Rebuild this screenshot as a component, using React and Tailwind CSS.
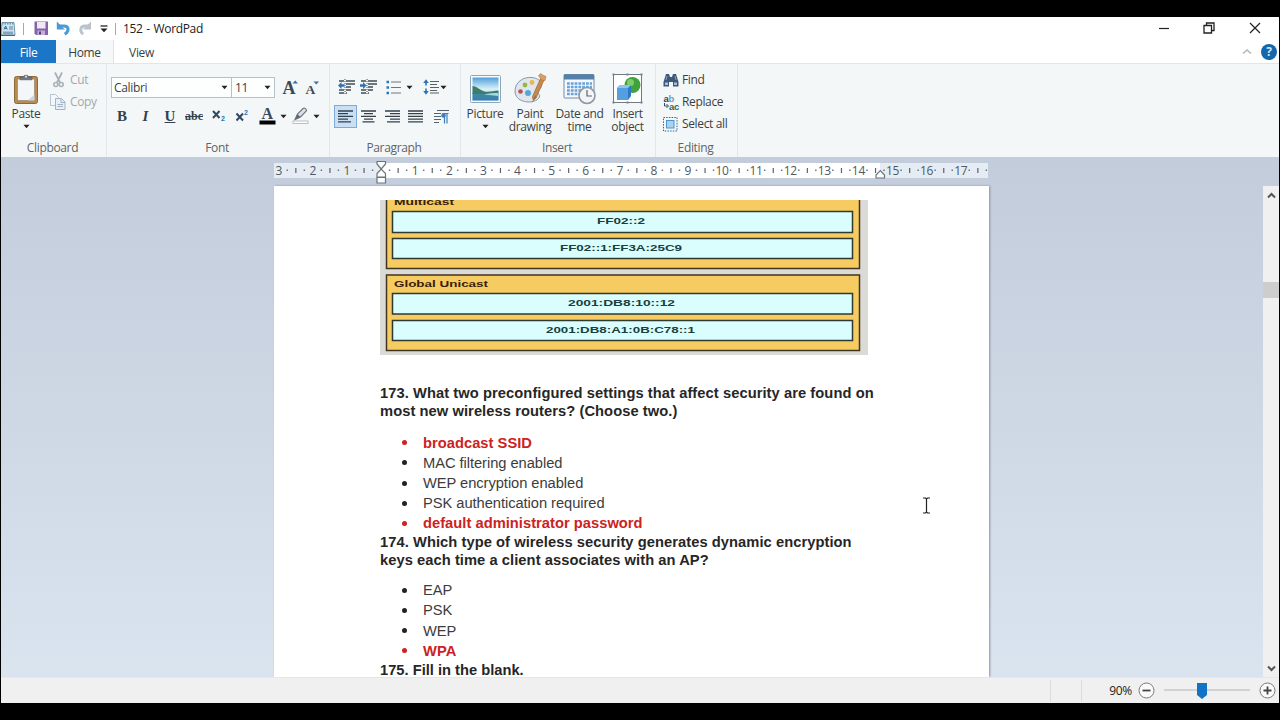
import React from 'react'

const UNIT = 34.1
const ZERO = 107

const Caret = ({ className = '' }) => (
  <svg className={`block shrink-0 ${className}`} width="7" height="5" viewBox="0 0 7 5">
    <path d="M0.5 0.8h6L3.5 4.2z" fill="#222" />
  </svg>
)

/* Title bar icons */
const AppIcon = () => (
  <svg width="15" height="16" viewBox="0 0 15 16">
    <path d="M1 1.5h12l1 12.5H0z" fill="#cfe4f0" stroke="#5d8299" strokeWidth="0.8" />
    <path d="M1 2.5h12" stroke="#6b9cb8" strokeWidth="2" strokeDasharray="1.5 1" />
    <path d="M3 8.5l1.6-3.5 1.6 3.5M3.6 7.5h2" stroke="#2c6b94" fill="none" />
    <path d="M8 6h4M8 8h4" stroke="#5b87a1" />
    <path d="M2 10.5h10v3H2z" fill="#7fa8c0" />
    <path d="M0 14.5h14" stroke="#44687d" />
  </svg>
)

const SaveIcon = () => (
  <svg width="15" height="15" viewBox="0 0 15 15">
    <path d="M0.5 0.5h13.5v13.5h-12l-1.5-1.5z" fill="#8562aa" />
    <rect x="3" y="1" width="8.5" height="6.5" fill="#efe8f4" />
    <rect x="3.5" y="9.5" width="7.5" height="4.5" fill="#c4b1d8" />
    <rect x="5" y="10.5" width="2" height="3" fill="#5b3a80" />
  </svg>
)

const UndoIcon = () => (
  <svg width="15" height="15" viewBox="0 0 15 15">
    <path d="M3 5h5c5 0 5.6 5 0.8 8.3" fill="none" stroke="#4a9bd3" strokeWidth="3" />
    <path d="M0.8 0.5V8.5h8z" fill="#4a9bd3" />
  </svg>
)

const RedoIcon = () => (
  <svg width="14" height="15" viewBox="0 0 14 15">
    <path d="M11 5H7C2 5 1.4 10 5 13.3" fill="none" stroke="#b9c3cd" strokeWidth="2.8" />
    <path d="M13 0.5V8.5H5z" fill="#b9c3cd" />
  </svg>
)

/* Clipboard icons */
const PasteIcon = () => (
  <svg width="26" height="32" viewBox="0 0 26 32">
    <rect x="1.5" y="3.5" width="23" height="27" rx="2" fill="#b98b4e" stroke="#8d6a3b" />
    <path d="M4.5 6h17v21.5h-17z" fill="#f4f7fa" stroke="#8c7a63" strokeWidth="0.6" />
    <path d="M21.5 21.5v6h-7z" fill="#cdd5dd" />
    <path d="M7 6.8V4.2h3.2C10.4 1.5 15.6 1.5 15.8 4.2H19v2.6z" fill="#6e7985" stroke="#4f5862" strokeWidth="0.6" />
    <circle cx="13" cy="3.8" r="1" fill="#dfe5ea" />
  </svg>
)

const CutIcon = () => (
  <svg width="11" height="16" viewBox="0 0 11 16">
    <path d="M2 0.5l5 10M9 0.5l-5 10" stroke="#a9b1ba" strokeWidth="1.8" fill="none" />
    <circle cx="2.8" cy="12.5" r="2" fill="none" stroke="#a9b1ba" strokeWidth="1.6" />
    <circle cx="8.2" cy="12.5" r="2" fill="none" stroke="#a9b1ba" strokeWidth="1.6" />
  </svg>
)

const CopyIcon = () => (
  <svg width="16" height="16" viewBox="0 0 16 16">
    <path d="M0.5 0.5h5l3 3v8h-8z" fill="#f5f8fb" stroke="#b6c3d2" />
    <path d="M5.5 4.5h6l3.5 3.5v7.5H5.5z" fill="#e9eff6" stroke="#a3b4c8" />
    <path d="M11 4.5V8.5h4M7.5 10.5h5.5M7.5 12.5h5.5" fill="none" stroke="#a3b4c8" />
  </svg>
)

/* Font icons */
const GrowIcon = ({ down, size }) => (
  <svg className="overflow-visible" width="17" height="18" viewBox="0 0 17 18">
    <text x="-0.5" y="15" fontSize={size} fontWeight="bold" fontFamily="Liberation Serif, serif" fill="#3b4a5a">A</text>
    {down
      ? <path d="M7.5 2.5h5.5l-2.7 3z" fill="#3a6ea5" />
      : <path d="M9.5 4.5h5.5l-2.7-3z" fill="#3a6ea5" />}
  </svg>
)

const ScriptIcon = ({ up }) => (
  <svg width="14" height="14" viewBox="0 0 14 14">
    <path d={up ? 'M1.5 4.5l6.5 7M8 4.5l-6.5 7' : 'M1 2L7.500 9M7.500 2L1 9'} stroke="#2f4863" strokeWidth="2" />
    <text x="9" y={up ? 6 : 12} fontSize="7" fontWeight="bold" fontFamily="Liberation Sans, sans-serif" fill="#2a74b8">2</text>
  </svg>
)

const FontColorIcon = () => (
  <svg width="17" height="18" viewBox="0 0 17 18">
    <text x="2.5" y="12" fontSize="16" fontWeight="bold" fontFamily="Liberation Serif, serif" fill="#3b4a5a">A</text>
    <rect x="0.5" y="13.5" width="16" height="4" fill="#000" />
  </svg>
)

const HighlightIcon = () => (
  <svg width="17" height="18" viewBox="0 0 17 18">
    <path d="M3 12.500l2.500-5.500L11 1.500c1.500-1 4 0.500 3.300 2.500L8.500 10z" fill="#dde1e6" stroke="#707a86" strokeWidth="1.2" />
    <path d="M5.500 7L8.500 10l-5.500 2.500z" fill="#5f6974" />
    <rect x="1" y="14" width="15" height="2.5" fill="#fff" stroke="#aab2ba" strokeWidth="0.8" />
  </svg>
)

/* Paragraph icons */
const IndentIcon = ({ right }) => (
  <svg width="17" height="16" viewBox="0 0 17 16">
    <path d="M1 2h5M8 2h9M8 5h9M8 8h5M1 11h5M8 11h5M1 14h5M8 14h1" stroke="#3f4c58" strokeWidth="1.7" />
    <path d="M7 0v15.5" stroke="#3f4c58" strokeDasharray="1 1" />
    {right
      ? <path d="M6.5 6.5L3 3v2.3H0v2.4h3V10z" fill="#2a74b8" />
      : <path d="M0 6.5L3.5 3v2.3h3v2.4h-3V10z" fill="#2a74b8" />}
  </svg>
)

const ListIcon = () => (
  <svg width="15" height="15" viewBox="0 0 15 15">
    <path d="M5 2h10M5 7.5h10M5 13h10" stroke="#6c7781" strokeWidth="1.2" />
    <path d="M0.5 2h2.5M0.5 7.5h2.5M0.5 13h2.5" stroke="#2a74b8" strokeWidth="2.5" />
  </svg>
)

const SpacingIcon = () => (
  <svg width="16" height="16" viewBox="0 0 16 16">
    <path d="M3 3v3.5M3 9.5V13" stroke="#2a74b8" strokeWidth="1.6" />
    <path d="M0.2 4L3 0.3 5.8 4zM0.2 12L3 15.7 5.8 12z" fill="#2a74b8" />
    <path d="M7 2.5h9M7 5.5h7M7 8.5h9M7 11.5h7M7 14h9" stroke="#56616c" strokeWidth="1.1" />
  </svg>
)

const AlignIcon = ({ d }) => (
  <svg width="15" height="13" viewBox="0 0 15 13">
    <path d={d} stroke="#35424e" strokeWidth="1.3" fill="none" />
  </svg>
)

const PilcrowIcon = () => (
  <svg width="15" height="15" viewBox="0 0 15 15">
    <path d="M3 1.5h12M0 4.5h7M0 7.5h7M0 10.5h7M0 13.5h5" stroke="#56616c" strokeWidth="1.2" />
    <path d="M10.5 4v10.5M13 4v10.5M8.5 4.5H14.5" stroke="#3f7fbd" strokeWidth="1.2" />
    <circle cx="9.5" cy="6.5" r="2.3" fill="#3f7fbd" />
  </svg>
)

/* Insert icons */
const PictureIcon = () => (
  <svg width="31" height="28" viewBox="0 0 31 28">
    <defs>
      <linearGradient id="sky" x1="0" y1="0" x2="0" y2="1">
        <stop offset="0" stopColor="#4f9fdb" />
        <stop offset="0.5" stopColor="#d9f0f7" />
        <stop offset="1" stopColor="#9ed2e6" />
      </linearGradient>
      <linearGradient id="lake" x1="0" y1="0" x2="0" y2="1">
        <stop offset="0" stopColor="#3f8a9c" />
        <stop offset="1" stopColor="#3b7fb6" />
      </linearGradient>
    </defs>
    <rect x="0.5" y="0.5" width="30" height="27" rx="1" fill="#fafcfd" stroke="#8fa5b8" />
    <rect x="2.5" y="2.5" width="26" height="23" fill="url(#sky)" />
    <rect x="2.5" y="18" width="26" height="7.5" fill="url(#lake)" />
    <path d="M2.5 11c4 0 7 4 12 5.5 5 1 9-1 14-1V19h-26z" fill="#3c7d6b" />
    <path d="M14 19.5c5-1.5 9-1.5 14.5-1.5v3z" fill="#a5d9e3" />
  </svg>
)

const PaintIcon = () => (
  <svg width="33" height="32" viewBox="0 0 33 32">
    <path d="M1 18C1 9.5 9 3.5 18 4.5c7 0.8 10 4.5 9.5 8.5-0.5 3-4 3-4 5.5 0 3 3 2.5 2 5.5-1.5 4-9 6-15 4.5C4.5 27 1 23.5 1 18z" fill="#dfe6ee" stroke="#8798ab" />
    <circle cx="6.5" cy="18.5" r="2.3" fill="#b8524b" />
    <circle cx="11" cy="12" r="2.4" fill="#94b93f" />
    <circle cx="18" cy="9.5" r="2.4" fill="#e8b84a" />
    <circle cx="14" cy="20" r="3" fill="#52a8da" />
    <path d="M26.5 5.5l3.5 1.5-8 18-3 1.5-0.5-3z" fill="#c88a4c" stroke="#9a6532" strokeWidth="0.7" />
    <path d="M24.5 2.5l2.5-2 1.5 1.5L32 3.5l-1 4-3.5-0.5z" fill="#d9a066" stroke="#a87340" strokeWidth="0.6" />
    <path d="M21.5 22l-4 8 5-5.5z" fill="#a56c34" />
  </svg>
)

const DateIcon = () => (
  <svg width="33" height="32" viewBox="0 0 33 32">
    <rect x="1" y="1.5" width="30" height="23.5" rx="1" fill="#f5f9fd" stroke="#6e8cab" />
    <rect x="1" y="1.5" width="30" height="5" fill="#5680aa" />
    <path d="M4 10.5h25M4 14h25M4 17.5h25M4 21h15" stroke="#6ba3d8" strokeWidth="2.4" strokeDasharray="2.8 1" />
    <circle cx="24" cy="22.5" r="8" fill="#f2f4f6" stroke="#8f979f" strokeWidth="1.6" />
    <path d="M24 17v6h5" fill="none" stroke="#5c666f" strokeWidth="1.2" />
  </svg>
)

const ObjectIcon = () => (
  <svg width="31" height="32" viewBox="0 0 31 32">
    <rect x="1.5" y="1.5" width="28" height="28" fill="#fff" stroke="#6f7a84" />
    <circle cx="20.5" cy="12" r="8" fill="#3fa33c" />
    <circle cx="18.5" cy="9.5" r="3.5" fill="#7ecb6c" />
    <path d="M5 15l3-3h11v11l-3 4H5z" fill="#2f78c4" />
    <path d="M5 15h11v12H5z" fill="#559fe0" />
    <path d="M5 15l3-3h11l-3 3z" fill="#8cc3ef" />
    <path d="M0.5 0.5h2v2h-2zM14.5 0.5h2v2h-2zM28.5 0.5h2v2h-2zM0.5 28.5h2v2h-2zM28.5 28.5h2v2h-2zM14.5 28.5h2v2h-2z" fill="#77818b" />
  </svg>
)

/* Editing icons */
const FindIcon = () => (
  <svg width="16" height="15" viewBox="0 0 16 15">
    <path d="M3 1h3l1 3h2l1-3h3l2.5 8v4.5h-5.5V9H6v4.5H0.5V9z" fill="#3d5878" />
    <path d="M2 9.5h3v2.5H2zM11 9.5h3v2.5h-3z" fill="#a9c0da" />
    <path d="M4 3L3 7M12 3l1 4" stroke="#8aa5c2" />
  </svg>
)

const ReplaceIcon = () => (
  <svg width="17" height="16" viewBox="0 0 17 16">
    <text x="0.5" y="7.5" fontSize="9.5" fontWeight="bold" fontFamily="Liberation Sans, sans-serif" fill="#2d4766">a<tspan fill="#6f9ac6">b</tspan></text>
    <text x="6" y="15.5" fontSize="9.5" fontWeight="bold" fontFamily="Liberation Sans, sans-serif" fill="#2c6b57">ac</text>
    <path d="M1.5 9v3h3M3.5 10l2 2-2 2" fill="none" stroke="#2d4766" />
  </svg>
)

const SelectIcon = () => (
  <svg width="15" height="15" viewBox="0 0 15 15">
    <rect x="0.5" y="0.5" width="13.5" height="13.5" fill="none" stroke="#2f6496" strokeDasharray="1.5 1.2" />
    <rect x="3.5" y="3.5" width="7.5" height="7.5" fill="#a8d4f2" stroke="#4a94cf" />
  </svg>
)

const Group = ({ label, className = '', children }) => (
  <div className={`flex h-full shrink-0 flex-col border-r border-[#e3e6e8] ${className}`}>
    <div className="h-[75px]">{children}</div>
    <div className="pr-[2px] text-center leading-[17px] text-[#5f6468]">{label}</div>
  </div>
)

const BigButton = ({ icon, lines, caret, className = '' }) => (
  <div className={`flex flex-col items-center ${className}`}>
    <div className="flex h-[37px] items-center">{icon}</div>
    {lines.map((l) => (
      <div key={l} className="h-[13px] whitespace-nowrap leading-[13px]">{l}</div>
    ))}
    {caret && <Caret className="mt-[4px]" />}
  </div>
)

const Ruler = () => {
  const marks = []
  for (let q = -12; q <= 71; q++) {
    if (q === 0) continue
    const x = ZERO + (q * UNIT) / 4
    if (q % 4 === 0) {
      marks.push(
        <text key={q} x={x} y="11.5" textAnchor="middle" fontSize="12" letterSpacing="-0.3" fill="#4f5961">{Math.abs(q / 4)}</text>
      )
    } else if (q % 2 === 0) {
      marks.push(<rect key={q} x={x - 0.5} y="5" width="1.2" height="5" fill="#59636b" />)
    } else {
      marks.push(<rect key={q} x={x - 0.7} y="6.5" width="1.5" height="1.5" fill="#6f787f" />)
    }
  }
  return (
    <svg className="block overflow-visible" width="714" height="15" viewBox="0 0 714 15">
      <rect width="714" height="15" fill="#e6ecf3" />
      <rect x={ZERO} width="499" height="15" fill="#fff" />
      {marks}
      <g fill="#fbfcfd" stroke="#6d747a" strokeWidth="1.2">
        <path d="M103 -1.5h8.5v2.5L107.2 6 103 1z" />
        <path d="M103 14v-3.5L107.2 6l4.3 4.5V14z" />
        <path d="M103 14.5h8.5v5.5H103z" />
        <path d="M602 15v-3l4.3-4.5L610.5 12v3z" />
      </g>
    </svg>
  )
}

const boxes = [
  { y: 11.5, h: 21, text: 'FF02::2', x: 217, w: 48 },
  { y: 38.5, h: 20, text: 'FF02::1:FF3A:25C9', x: 180, w: 122 },
  { y: 93.5, h: 20.5, text: '2001:DB8:10::12', x: 188, w: 107 },
  { y: 120.5, h: 20, text: '2001:DB8:A1:0B:C78::1', x: 166, w: 149 },
]

const AddressDiagram = () => (
  <svg className="block" width="488" height="155" viewBox="0 0 488 155" fontFamily="Liberation Sans, sans-serif" fontWeight="bold" fontSize="9">
    <rect width="488" height="155" fill="#dcdad7" />
    <g fill="#f6cb61" stroke="#40351c" strokeWidth="1.5">
      <rect x="6.5" y="-10" width="473" height="78.5" />
      <rect x="6.5" y="75" width="473" height="75.5" />
    </g>
    <text x="14" y="5" textLength="60" lengthAdjust="spacingAndGlyphs" fill="#3a1d08">Multicast</text>
    <text x="14" y="86.5" textLength="94" lengthAdjust="spacingAndGlyphs" fill="#3a1d08">Global Unicast</text>
    {boxes.map((b) => (
      <g key={b.text}>
        <rect x="12.5" y={b.y} width="460" height={b.h} fill="#d9fefd" stroke="#2c3a33" strokeWidth="1.5" />
        <text x={b.x} y={b.y + 12} textLength={b.w} lengthAdjust="spacingAndGlyphs" fill="#17403f">{b.text}</text>
      </g>
    ))}
  </svg>
)

const Bullet = ({ red, children }) => (
  <li className={`flex h-[20.2px] items-center ${red ? 'font-bold tracking-[0.03px] text-[#cc2222]' : 'tracking-[-0.05px] text-[#3c3c3c]'}`}>
    <span className={`ml-[22px] mr-[16px] size-[5px] rounded-full ${red ? 'bg-[#cc2222]' : 'bg-[#222]'}`} />
    <span>{children}</span>
  </li>
)

export default function App() {
  return (
    <div className="h-[720px] w-[1280px] overflow-hidden bg-black px-px pt-[17px] font-['Open_Sans','Noto_Sans',sans-serif] text-[12px] tracking-[-0.35px] text-[#3b3f43]">
      <div className="flex h-[686px] flex-col bg-white">
        {/* Title bar */}
        <div className="flex h-[23px] shrink-0 items-center">
          <AppIcon />
          <span className="ml-[7px] h-[12px] w-px bg-[#a8a8a8]" />
          <span className="ml-[10px]"><SaveIcon /></span>
          <span className="ml-[7px]"><UndoIcon /></span>
          <span className="ml-[7px]"><RedoIcon /></span>
          <svg className="ml-[8px]" width="8" height="8" viewBox="0 0 8 8">
            <path d="M0.5 1h7" stroke="#222" strokeWidth="1.3" />
            <path d="M0.5 3.5h7L4 7.2z" fill="#222" />
          </svg>
          <span className="ml-[7px] h-[12px] w-px bg-[#a8a8a8]" />
          <span className="ml-[7px] text-[#222] [word-spacing:1px]">152 - WordPad</span>
          <div className="ml-auto flex items-center pr-[18px]">
            <svg width="12" height="12" viewBox="0 0 12 12"><path d="M1 5.5h10" stroke="#222" strokeWidth="1.2" /></svg>
            <svg className="-mt-[2px] ml-[33px]" width="12" height="12" viewBox="0 0 12 12" fill="none" stroke="#222" strokeWidth="1.3">
              <path d="M1 3.5h7.5V11H1zM3.5 3.5V1H11v7.5H8.5" />
            </svg>
            <svg className="-mt-[2px] ml-[34px]" width="12" height="12" viewBox="0 0 12 12"><path d="M1 1l10 10M11 1L1 11" stroke="#222" strokeWidth="1.2" /></svg>
          </div>
        </div>

        {/* Tabs */}
        <div className="flex h-[23px] shrink-0 items-stretch leading-[25px]">
          <div className="w-[55px] bg-[#1b76c7] text-center text-white">File</div>
          <div className="w-[58px] border-r border-[#e0e3e5] bg-[#f5f7f8] text-center">Home</div>
          <div className="w-[55px] text-center">View</div>
          <div className="ml-auto flex items-center">
            <svg width="10" height="7" viewBox="0 0 10 7"><path d="M1 5.5l4-3.5 4 3.5" fill="none" stroke="#b5b5b5" strokeWidth="1.5" /></svg>
            <div className="ml-[9px] mr-[2px] size-[16px] rounded-full bg-[#1566ab] text-center text-[12px] font-bold leading-[16px] text-[#cfe6f7]">?</div>
          </div>
        </div>

        {/* Ribbon */}
        <div className="flex h-[94px] shrink-0 border-t border-[#e3e6e7] bg-[#f4f7f7]">
          <Group label="Clipboard" className="w-[106px]">
            <div className="flex">
              <BigButton className="ml-[8px] w-[34px] pt-[6px]" icon={<PasteIcon />} lines={['Paste']} caret />
              <div className="ml-[7px] pt-[8px] text-[#a3a7ab]">
                <div className="flex h-[16px] items-center"><span className="ml-[3px] w-[17px]"><CutIcon /></span>Cut</div>
                <div className="mt-[6px] flex h-[16px] items-center"><span className="w-[20px]"><CopyIcon /></span>Copy</div>
              </div>
            </div>
          </Group>

          <Group label="Font" className="w-[223px]">
            <div className="flex items-center pl-[4px] pt-[13px]">
              <div className="flex h-[21px] w-[121px] items-center justify-between border border-[#b5c0ca] bg-[#fdfefe] pl-[2px] pr-[3px]">Calibri<Caret /></div>
              <div className="-ml-px flex h-[21px] w-[44px] items-center justify-between border border-[#b5c0ca] bg-[#fdfefe] pl-[3px] pr-[3px]">11<Caret /></div>
              <span className="ml-[8px]"><GrowIcon size="18" /></span>
              <span className="ml-[6px]"><GrowIcon size="13.5" down /></span>
            </div>
            <div className="mt-[8px] flex h-[20px] items-center pl-[4px] font-['Liberation_Serif',serif] text-[15px] tracking-normal text-[#34424f]">
              <span className="w-[22px] text-center font-bold">B</span>
              <span className="w-[25px] text-center font-bold italic">I</span>
              <span className="w-[24px] text-center font-bold underline">U</span>
              <span className="w-[24px] text-center text-[12px] font-bold line-through">abc</span>
              <span className="ml-[6px]"><ScriptIcon /></span>
              <span className="ml-[9px]"><ScriptIcon up /></span>
              <span className="ml-[10px]"><FontColorIcon /></span>
              <Caret className="ml-[4px]" />
              <span className="ml-[5px]"><HighlightIcon /></span>
              <Caret className="ml-[4px]" />
            </div>
          </Group>

          <Group label="Paragraph" className="w-[131px]">
            <div className="mt-[14px] flex h-[18px] items-center pl-[8px]">
              <IndentIcon />
              <span className="ml-[5px]"><IndentIcon right /></span>
              <span className="ml-[9px]"><ListIcon /></span>
              <Caret className="ml-[5px]" />
              <span className="ml-[10px]"><SpacingIcon /></span>
              <Caret className="ml-px" />
            </div>
            <div className="mt-[9px] flex h-[23px] items-center pl-[4px]">
              <span className="flex h-[23px] w-[23px] items-center justify-center border border-[#7fa9d6] bg-[#c9dff5]"><AlignIcon d="M0 1h15M0 3.7h10M0 6.4h15M0 9.1h10M0 11.8h13" /></span>
              <span className="ml-[4px]"><AlignIcon d="M0 1h15M3 3.7h9M0 6.4h15M3 9.1h9M1.5 11.8h12" /></span>
              <span className="ml-[9px]"><AlignIcon d="M0 1h15M5 3.7h10M0 6.4h15M5 9.1h10M2 11.8h13" /></span>
              <span className="ml-[8px]"><AlignIcon d="M0 1h15M0 3.7h15M0 6.4h15M0 9.1h15M0 11.8h15" /></span>
              <span className="ml-[11px]"><PilcrowIcon /></span>
            </div>
          </Group>

          <Group label="Insert" className="w-[195px]">
            <div className="flex pt-[6px]">
              <BigButton className="ml-px w-[46px]" icon={<PictureIcon />} lines={['Picture']} caret />
              <BigButton className="w-[44px]" icon={<PaintIcon />} lines={['Paint', 'drawing']} />
              <BigButton className="w-[55px]" icon={<DateIcon />} lines={['Date and', 'time']} />
              <BigButton className="w-[41px]" icon={<ObjectIcon />} lines={['Insert', 'object']} />
            </div>
          </Group>

          <Group label="Editing" className="w-[82px]">
            <div className="flex flex-col gap-[6px] pl-[7px] pt-[8px]">
              <div className="flex h-[16px] items-center"><span className="w-[19px]"><FindIcon /></span>Find</div>
              <div className="flex h-[16px] items-center"><span className="w-[19px]"><ReplaceIcon /></span>Replace</div>
              <div className="flex h-[16px] items-center whitespace-nowrap"><span className="w-[19px]"><SelectIcon /></span>Select all</div>
            </div>
          </Group>
        </div>

        {/* Document area */}
        <div className="flex min-h-0 grow flex-col bg-linear-to-b from-[#c2ccdb] to-[#dae4ef] pt-[6px]">
          <div className="ml-[273px] h-[23px] shrink-0"><Ruler /></div>
          <div className="flex min-h-0 grow">
            <div className="ml-[273px] w-[715px] overflow-hidden bg-white pl-[106px] pt-[14px] font-['Liberation_Sans',Arial,sans-serif] text-[14.7px] tracking-normal shadow-[1px_0_2px_#8794a6]">
              <AddressDiagram />
              <div className="mt-[29px] whitespace-nowrap font-bold leading-[18.3px] tracking-[0.07px] text-[#262626]">
                <p>173. What two preconfigured settings that affect security are found on</p>
                <p>most new wireless routers? (Choose two.)</p>
              </div>
              <ul className="mt-[12px]">
                <Bullet red>broadcast SSID</Bullet>
                <Bullet>MAC filtering enabled</Bullet>
                <Bullet>WEP encryption enabled</Bullet>
                <Bullet>PSK authentication required</Bullet>
                <Bullet red>default administrator password</Bullet>
              </ul>
              <div className="-mt-px whitespace-nowrap font-bold leading-[18.3px] tracking-[0.06px] text-[#262626]">
                <p>174. Which type of wireless security generates dynamic encryption</p>
                <p>keys each time a client associates with an AP?</p>
              </div>
              <ul className="mt-[11px]">
                <Bullet>EAP</Bullet>
                <Bullet>PSK</Bullet>
                <Bullet>WEP</Bullet>
                <Bullet red>WPA</Bullet>
              </ul>
              <p className="whitespace-nowrap font-bold leading-[18.3px] text-[#262626]">175. Fill in the blank.</p>
            </div>
            {/* Mouse cursor over the right margin */}
            <div className="grow">
              <svg className="relative -left-[67px] top-[311px]" width="9" height="17" viewBox="0 0 9 17">
                <path d="M1 1h2.5l1 1 1-1H8M4.5 2v13M1 16h2.5l1-1 1 1H8" fill="none" stroke="#222" strokeWidth="1.2" />
              </svg>
            </div>
            <div className="flex w-[16px] shrink-0 flex-col items-center bg-[#f0f0f0]">
              <svg className="mt-[6px]" width="9" height="7" viewBox="0 0 9 7"><path d="M1 5.5L4.5 2 8 5.5" fill="none" stroke="#555" strokeWidth="2" /></svg>
              <div className="mt-[83px] h-[16px] w-full bg-[#cdcdcd]" />
              <svg className="mb-[5px] mt-auto" width="9" height="7" viewBox="0 0 9 7"><path d="M1 1.5L4.5 5 8 1.5" fill="none" stroke="#555" strokeWidth="2" /></svg>
            </div>
          </div>
        </div>

        {/* Status bar */}
        <div className="flex h-[26px] shrink-0 items-center justify-end border-t border-[#e4e6e8] bg-[#f0f0f0] text-[#222]">
          <span className="h-[22px] w-px bg-[#dcdcdc]" />
          <span className="ml-[30px] h-[22px] w-px bg-[#dcdcdc]" />
          <span className="ml-[26px] w-[25px] text-center">90%</span>
          <svg className="ml-[5px]" width="17" height="17" viewBox="0 0 17 17">
            <circle cx="8.5" cy="8.5" r="7.5" fill="#fafafa" stroke="#7b7b7b" />
            <path d="M4.5 8.5h8" stroke="#444" strokeWidth="1.8" />
          </svg>
          <svg className="ml-[8px]" width="88" height="18" viewBox="0 0 88 18">
            <path d="M1 8h86" stroke="#d2d2d2" strokeWidth="2" />
            <path d="M34 1h10v12l-5 4-5-4z" fill="#1272c6" />
          </svg>
          <svg className="ml-[8px] mr-[3px]" width="17" height="17" viewBox="0 0 17 17">
            <circle cx="8.5" cy="8.5" r="7.5" fill="#fafafa" stroke="#7b7b7b" />
            <path d="M4.5 8.5h8M8.5 4.5v8" stroke="#444" strokeWidth="1.8" />
          </svg>
        </div>
      </div>
    </div>
  )
}
